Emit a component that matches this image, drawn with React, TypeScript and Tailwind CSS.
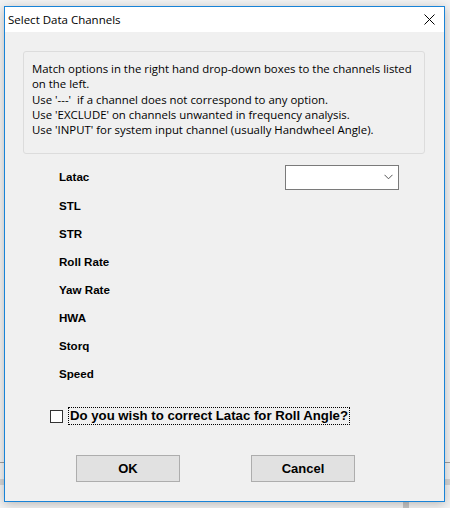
import React from "react";

const channels = ["STL", "STR", "Roll Rate", "Yaw Rate", "HWA", "Storq", "Speed"];

export default function App() {
  return (
    <div className="relative w-[450px] h-[508px] overflow-hidden bg-[#f3f3f3]">
      {/* bits of the window behind */}
      <div className="absolute left-0 top-[462px] w-[450px] h-[1px] bg-[#a0a0a0]" />
      <div className="absolute left-0 top-[479px] w-[450px] h-[6px] bg-[#d6d6d6]" />
      <div className="absolute left-[403px] top-[485px] w-[6px] h-[23px] bg-[#c6c6c6]" />

      {/* dialog */}
      <div
        className="absolute left-[4px] top-[6px] w-[441px] h-[496px] border border-[#1883d7] bg-[#f0f0f0] flex flex-col shadow-[0_2px_10px_rgba(0,0,0,0.25)]"
        style={{ fontFamily: '"Open Sans", "Noto Sans", sans-serif' }}
      >
        {/* title bar */}
        <div className="h-[25px] bg-white flex items-center justify-between pl-[3px] pr-[9px] shrink-0">
          <span className="text-[11.5px] text-black leading-none">Select Data Channels</span>
          <svg width="11" height="11" viewBox="0 0 11 11" className="block">
            <path d="M0.5 0.5 L10.5 10.5 M10.5 0.5 L0.5 10.5" stroke="#000" strokeWidth="1" fill="none" />
          </svg>
        </div>

        {/* body */}
        <div className="flex flex-col pt-[19px]">
          <div className="ml-[18px] w-[402px] h-[103px] border border-[#dcdcdc] rounded-[3px] pl-[8px] pt-[9px] text-[11.4px] leading-[15.3px] text-black">
            <p>Match options in the right hand drop-down boxes to the channels listed on the left.</p>
            <p>Use '---'&nbsp; if a channel does not correspond to any option.</p>
            <p>Use 'EXCLUDE' on channels unwanted in frequency analysis.</p>
            <p>Use 'INPUT' for system input channel (usually Handwheel Angle).</p>
          </div>

          <div
            className="mt-[8px] pl-[54px] flex flex-col font-bold text-[11.6px] text-black"
            style={{ fontFamily: '"Liberation Sans", Arial, sans-serif' }}
          >
            <div className="h-[30px] flex items-center">
              <span className="w-[226px]">Latac</span>
              <div className="w-[114px] h-[25px] border border-[#7a7a7a] bg-white flex items-center justify-end pr-[5px]">
                <svg width="9" height="6" viewBox="0 0 9 6" className="block">
                  <path d="M0.5 0.8 L4.5 4.8 L8.5 0.8" stroke="#555" strokeWidth="1" fill="none" />
                </svg>
              </div>
            </div>
            {channels.map((c) => (
              <div key={c} className="h-[28px] flex items-center">
                {c}
              </div>
            ))}
          </div>

          <div
            className="mt-[19px] ml-[45px] flex items-center gap-[5px] font-bold text-black"
            style={{ fontFamily: '"Liberation Sans", Arial, sans-serif' }}
          >
            <div className="w-[13px] h-[13px] border border-[#333] bg-white" />
            <span className="border border-dotted border-black px-[1px] h-[18px] flex items-center text-[13.2px] leading-none">
              Do you wish to correct Latac for Roll Angle?
            </span>
          </div>

          <div
            className="mt-[30px] flex font-bold text-[13px] text-black"
            style={{ fontFamily: '"Liberation Sans", Arial, sans-serif' }}
          >
            <button className="ml-[71px] w-[104px] h-[27px] bg-[#e1e1e1] border border-[#adadad] flex items-center justify-center">
              OK
            </button>
            <button className="ml-[71px] w-[104px] h-[27px] bg-[#e1e1e1] border border-[#adadad] flex items-center justify-center">
              Cancel
            </button>
          </div>
        </div>
      </div>
    </div>
  );
}
